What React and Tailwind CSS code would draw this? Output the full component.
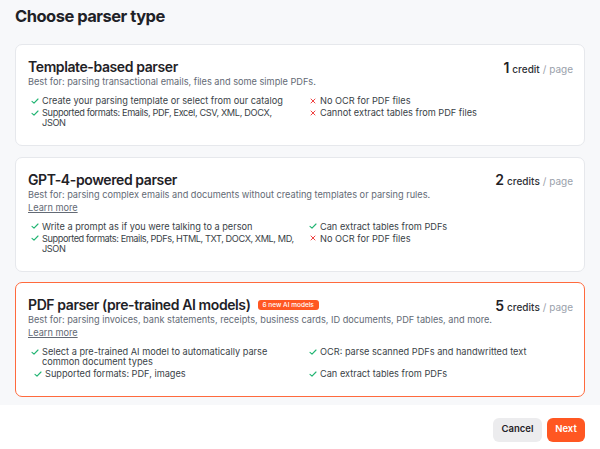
import React from "react";

const Check = () => (
  <span className="w-[9px] h-[9px] shrink-0 flex items-center justify-center">
    <svg viewBox="0 0 12 12" className="w-[8px] h-[8px]" fill="none" stroke="#22b573" strokeWidth="1.7" strokeLinecap="round" strokeLinejoin="round">
      <path d="M1.5 6.5 L4.5 9.3 L10.5 3" />
    </svg>
  </span>
);
const Cross = () => (
  <span className="w-[9px] h-[9px] shrink-0 flex items-center justify-center">
    <svg viewBox="0 0 12 12" className="w-[6px] h-[6px]" fill="none" stroke="#ef4444" strokeWidth="2" strokeLinecap="round">
      <path d="M2 2 L10 10 M10 2 L2 10" />
    </svg>
  </span>
);

const Item = ({ ok = true, children, indent = false, tight = "" }) => (
  <div className={"flex items-start gap-[3px] whitespace-nowrap " + (indent ? "pl-[3px]" : "")}>
    {ok ? <Check /> : <Cross />}
    <span className={"leading-[10px] " + tight}>{children}</span>
  </div>
);

const Credits = ({ n, label }) => (
  <div className="flex items-baseline whitespace-nowrap">
    <span className="text-[14px] font-semibold text-[#1f2227] mr-[3px]">{n}</span>
    <span className="text-[10px] font-medium text-[#2d3036]">{label}</span>
    <span className="text-[10px] text-[#9aa1ab] ml-[3px]">/ page</span>
  </div>
);

const Card = ({ title, badge, sub, learn, credits, left, right, active }) => (
  <div
    className={
      "bg-white rounded-[7px] pl-[12px] pr-[11px] pt-[13px] pb-[17px] " +
      (active ? "border-[1.5px] border-[#ff6a3d]" : "border border-[#e6e8ec]")
    }
  >
    <div className="flex justify-between items-center h-[18px]">
      <div className="flex items-center gap-[7px]">
        <h2 className="text-[14px] font-semibold text-[#1f2227] leading-[18px] tracking-[-0.4px]">{title}</h2>
        {badge && (
          <span className="bg-[#ff5722] text-white text-[6.5px] leading-[10px] px-[5px] rounded-[3px] font-medium">{badge}</span>
        )}
      </div>
      <div>{credits}</div>
    </div>
    <p className="text-[9.2px] text-[#636a75] leading-[12px]">{sub}</p>
    {learn && (
      <a className="text-[9.2px] text-[#636a75] underline leading-[12px] block w-fit mt-[1px] mb-[2px]">Learn more</a>
    )}
    <div className="grid grid-cols-[278px_1fr] gap-y-[2px] mt-[8px] text-[9.2px] text-[#3a3f47] pl-[2px]">
      {left.map((l, i) => (
        <React.Fragment key={i}>
          <div>{l}</div>
          <div>{right[i]}</div>
        </React.Fragment>
      ))}
    </div>
  </div>
);

export default function App() {
  return (
    <div className="w-[600px] h-[449px] bg-[#f7f8fa] flex flex-col overflow-hidden" style={{ fontFamily: "Inter, 'Noto Sans', sans-serif" }}>
      <div className="h-[405px] px-[15px] shrink-0">
        <h1 className="text-[16.5px] font-bold text-[#1f2227] pt-[4px] leading-[24px] tracking-[-0.5px]">Choose parser type</h1>
        <div className="flex flex-col gap-[10.5px] mt-[16px]">
          <Card
            title="Template-based parser"
            sub="Best for: parsing transactional emails, files and some simple PDFs."
            credits={<Credits n="1" label="credit" />}
            left={[
              <Item>Create your parsing template or select from our catalog</Item>,
              <Item tight="tracking-[-0.35px]">Supported formats: Emails, PDF, Excel, CSV, XML, DOCX,<br />JSON</Item>,
            ]}
            right={[
              <Item ok={false}>No OCR for PDF files</Item>,
              <Item ok={false}>Cannot extract tables from PDF files</Item>,
            ]}
          />
          <Card
            title="GPT-4-powered parser"
            sub="Best for: parsing complex emails and documents without creating templates or parsing rules."
            learn
            credits={<Credits n="2" label="credits" />}
            left={[
              <Item>Write a prompt as if you were talking to a person</Item>,
              <Item tight="tracking-[-0.42px]">Supported formats: Emails, PDFs, HTML, TXT, DOCX, XML, MD,<br />JSON</Item>,
            ]}
            right={[
              <Item>Can extract tables from PDFs</Item>,
              <Item ok={false}>No OCR for PDF files</Item>,
            ]}
          />
          <Card
            active
            title="PDF parser (pre-trained AI models)"
            badge="6 new AI models"
            sub="Best for: parsing invoices, bank statements, receipts, business cards, ID documents, PDF tables, and more."
            learn
            credits={<Credits n="5" label="credits" />}
            left={[
              <Item>Select a pre-trained AI model to automatically parse<br />common document types</Item>,
              <Item indent>Supported formats: PDF, images</Item>,
            ]}
            right={[
              <Item>OCR: parse scanned PDFs and handwritted text</Item>,
              <Item>Can extract tables from PDFs</Item>,
            ]}
          />
        </div>
      </div>
      <div className="h-[44px] bg-white flex items-center justify-end gap-[5px] px-[15px] pt-[5px] shrink-0">
        <button className="h-[24px] w-[49px] rounded-[6px] bg-[#ececee] text-[9.5px] font-semibold text-[#1f2227]">Cancel</button>
        <button className="h-[24px] w-[38px] rounded-[6px] bg-[#ff5722] text-[9.5px] font-semibold text-white">Next</button>
      </div>
    </div>
  );
}
